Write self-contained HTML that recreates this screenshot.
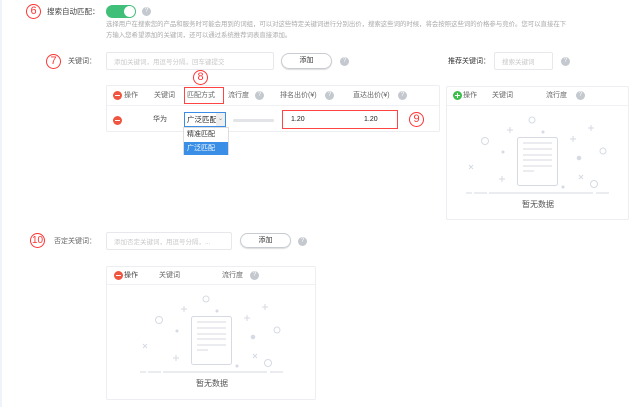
<!DOCTYPE html>
<html><head><meta charset="utf-8"><style>
*{margin:0;padding:0;box-sizing:border-box}
body{width:641px;height:407px;background:#fff;position:relative;overflow:hidden;font-family:"Liberation Sans","Noto Sans CJK SC",sans-serif;font-size:7px;color:#666}
.a{position:absolute;white-space:nowrap;line-height:1}
.num{position:absolute;border:1px solid #f33;border-radius:50%;color:#f33;font-size:11px;text-align:center;line-height:13px;width:15px;height:15px}
.q{position:absolute;width:9px;height:9px;border-radius:50%;background:#c4c8cf;color:#fff;font-size:6px;text-align:center;line-height:9px}
.inp{position:absolute;border:1px solid #e6e8ec;border-radius:2px;color:#c8c8c8;font-size:6.5px;padding-left:7px;display:flex;align-items:center}
.btn{position:absolute;border:1px solid #c8ccd2;border-radius:9px;color:#333;font-size:7px;text-align:center;box-shadow:0 1px 1px #ddd}
.box{position:absolute;border:1px solid #eceef2;border-radius:2px}
.minus{position:absolute;width:9px;height:9px;border-radius:50%;background:#f0553f}
.minus:after{content:"";position:absolute;left:2px;top:4px;width:5px;height:1px;background:#fff}
.plus{position:absolute;width:9px;height:9px;border-radius:50%;background:#3cbf4a}
.plus:after{content:"";position:absolute;left:2px;top:4px;width:5px;height:1px;background:#fff}
.plus:before{content:"";position:absolute;left:4px;top:2px;width:1px;height:5px;background:#fff}
</style></head><body>
<div style="position:absolute;left:0;top:0;width:2px;height:407px;background:#eef4fa"></div>

<div class="num" style="left:26px;top:4px">6</div>
<div class="a" style="left:47px;top:8px;color:#444;font-size:7.5px">搜索自动匹配：</div>
<div style="position:absolute;left:106px;top:5px;width:30px;height:13px;border-radius:7px;background:#3fbf78"><div style="position:absolute;right:1px;top:1px;width:11px;height:11px;border-radius:50%;background:#fff"></div></div>
<div class="q" style="left:142px;top:7px">?</div>
<div class="a" style="left:106px;top:22px;color:#aaa;font-size:6.4px">选择用户在搜索您的产品和服务时可能会用到的词组，可以对这些特定关键词进行分别出价，搜索这些词的时候，将会按照这些词的价格参与竞价。您可以直接在下</div>
<div class="a" style="left:106px;top:33px;color:#aaa;font-size:6.4px">方输入您希望添加的关键词，还可以通过系统推荐词表直接添加。</div>

<div class="num" style="left:46px;top:54px">7</div>
<div class="a" style="left:68px;top:58px;font-size:7px;color:#555">关键词：</div>
<div class="inp" style="left:106px;top:52px;width:168px;height:18px">添加关键词，用逗号分隔，回车键提交</div>
<div class="btn" style="left:281px;top:53px;width:51px;height:16px;line-height:14px">添加</div>
<div class="q" style="left:340px;top:57px">?</div>
<div class="a" style="left:448px;top:58px;color:#333">推荐关键词：</div>
<div class="inp" style="left:494px;top:52px;width:59px;height:18px">搜索关键词</div>
<div class="q" style="left:561px;top:57px">?</div>

<div class="num" style="left:193px;top:70px">8</div>
<div class="box" style="left:106px;top:85px;width:334px;height:47px"></div>
<div style="position:absolute;left:107px;top:105px;width:332px;height:1px;background:#f0f1f4"></div>
<div style="position:absolute;left:184px;top:87px;width:40px;height:17px;border:1px solid #f44"></div>
<div class="minus" style="left:113px;top:91px"></div>
<div class="a" style="left:124px;top:92px">操作</div>
<div class="a" style="left:154px;top:92px">关键词</div>
<div class="a" style="left:187px;top:92px">匹配方式</div>
<div class="a" style="left:228px;top:92px">流行度</div>
<div class="q" style="left:255px;top:91px">?</div>
<div class="a" style="left:280px;top:92px">排名出价(¥)</div>
<div class="q" style="left:325px;top:91px">?</div>
<div class="a" style="left:353px;top:92px">直达出价(¥)</div>
<div class="q" style="left:398px;top:91px">?</div>
<div class="minus" style="left:113px;top:116px"></div>
<div class="a" style="left:153px;top:116px;color:#444">华为</div>
<div style="position:absolute;left:184px;top:112px;width:42px;height:15px;border:1px solid #3a8ee6;background:#fff"><span class="a" style="left:2px;top:3px;color:#222;font-size:7.5px">广泛匹配</span><div style="position:absolute;right:0;top:0;width:9px;height:13px;background:#eee;color:#888;font-size:6px;text-align:center;line-height:13px">⌄</div></div>
<div style="position:absolute;left:183px;top:127px;width:46px;height:28px;border:1px solid #ddd;background:#fff"><div class="a" style="left:3px;top:3px;color:#333">精准匹配</div><div style="position:absolute;left:0;top:14px;width:44px;height:13px;background:#3a8ee6"><span class="a" style="left:3px;top:3px;color:#fff">广泛匹配</span></div></div>
<div style="position:absolute;left:233px;top:119px;width:41px;height:3px;border-radius:2px;background:#e2e4e8"></div>
<div style="position:absolute;left:282px;top:110px;width:116px;height:19px;border:1px solid #f44"></div>
<div class="a" style="left:291px;top:116px;color:#222">1.20</div>
<div class="a" style="left:364px;top:116px;color:#222">1.20</div>
<div class="num" style="left:409px;top:112px">9</div>

<div class="box" style="left:446px;top:86px;width:183px;height:134px"></div>
<div style="position:absolute;left:447px;top:105px;width:181px;height:1px;background:#f0f1f4"></div>
<div class="plus" style="left:453px;top:91px"></div>
<div class="a" style="left:463px;top:92px">操作</div>
<div class="a" style="left:492px;top:92px">关键词</div>
<div class="a" style="left:546px;top:92px">流行度</div>
<div class="q" style="left:576px;top:91px">?</div>

<svg style="position:absolute;left:0;top:0" width="641" height="407">
<defs><g id="il" stroke="#d6dae2" fill="none" stroke-width="1">
<circle cx="532" cy="120" r="3"/><circle cx="543" cy="132" r="1" fill="#d6dae2"/>
<path d="M507 130h6M510 127v6M588 128h6M591 125v6M570 139h6M573 136v6M499 179h6M502 176v6M469 165l4 4M473 165l-4 4M579 175l4 4M583 175l-4 4"/>
<circle cx="485" cy="141" r="3.5"/><circle cx="503" cy="152" r="1" fill="#d6dae2"/><circle cx="603" cy="151" r="3"/><circle cx="579" cy="158" r="1.8" fill="#d6dae2"/><circle cx="594" cy="184" r="3.5"/><circle cx="563" cy="187" r="1" fill="#d6dae2"/>
<rect x="517.5" y="137.5" width="40" height="48" rx="2" fill="#fff"/>
<path d="M523 143h29M523 149h29M523 155h29M523 160h29M523 166h29M523 171h11M466 193h6M474 193h13M489 193h104M596 193h13"/>
</g></defs>
<use href="#il"/>
<use href="#il" transform="translate(-326 179)"/>
</svg>
<div class="a" style="left:522px;top:201px;font-size:8px;color:#555">暂无数据</div>

<div class="num" style="left:30px;top:233px;font-size:10px">10</div>
<div class="a" style="left:54px;top:238px">否定关键词：</div>
<div class="inp" style="left:106px;top:232px;width:126px;height:18px">添加否定关键词，用逗号分隔，...</div>
<div class="btn" style="left:240px;top:233px;width:51px;height:15px;line-height:13px">添加</div>
<div class="q" style="left:298px;top:237px">?</div>

<div class="box" style="left:106px;top:266px;width:210px;height:134px"></div>
<div style="position:absolute;left:107px;top:284px;width:208px;height:1px;background:#f0f1f4"></div>
<div class="minus" style="left:114px;top:271px"></div>
<div class="a" style="left:124px;top:272px;color:#444">操作</div>
<div class="a" style="left:159px;top:272px">关键词</div>
<div class="a" style="left:222px;top:272px">流行度</div>
<div class="q" style="left:250px;top:271px">?</div>
<div class="a" style="left:196px;top:380px;font-size:8px;color:#555">暂无数据</div>
</body></html>
